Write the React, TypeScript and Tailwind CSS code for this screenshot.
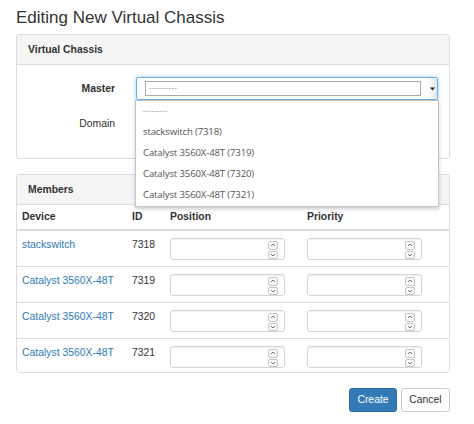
import React from "react";

const rows = [
  { name: "stackswitch", id: "7318" },
  { name: "Catalyst 3560X-48T", id: "7319" },
  { name: "Catalyst 3560X-48T", id: "7320" },
  { name: "Catalyst 3560X-48T", id: "7321" },
];

const rowH = ["h-[35px]", "h-[36px]", "h-[36px]", "h-[34px]"];

function Spinner() {
  return (
    <div className="absolute right-[6px] top-[2px] flex flex-col gap-[1px]">
      {[0, 1].map((i) => (
        <div
          key={i}
          className="w-[10px] h-[8.5px] border border-[#c8c8c8] rounded-[2px] bg-[#f8f8f8] flex items-center justify-center"
        >
          <svg width="6" height="4" viewBox="0 0 6 4">
            <path
              d={i === 0 ? "M1 3 L3 1 L5 3" : "M1 1 L3 3 L5 1"}
              fill="none"
              stroke="#666"
              strokeWidth="0.9"
            />
          </svg>
        </div>
      ))}
    </div>
  );
}

function NumInput() {
  return (
    <div className="relative w-[115px] h-[22px] border border-[#d4d4d4] rounded-[3px] bg-white shadow-[inset_0_1px_1px_rgba(0,0,0,0.06)]">
      <Spinner />
    </div>
  );
}

export default function App() {
  return (
    <div
      className="w-[474px] h-[424px] bg-white text-[#333] pl-[16px] pr-[24px] pt-[8px]"
      style={{ fontFamily: "'Liberation Sans', Arial, sans-serif" }}
    >
      <h1 className="text-[17px] leading-[20px] font-normal mb-[6px]">Editing New Virtual Chassis</h1>

      {/* Panel 1 */}
      <div className="border border-[#ddd] rounded-[3px]">
        <div className="h-[30px] bg-[#f5f5f5] border-b border-[#ddd] flex items-center pl-[11px] text-[10.4px] font-bold rounded-t-[3px]">
          Virtual Chassis
        </div>
        <div className="pt-[12px] pb-[23px] flex flex-col gap-[12px] relative">
          <div className="flex items-center h-[23px]">
            <div className="w-[98px] text-right text-[10.4px] font-bold">Master</div>
            <div className="ml-[21px] w-[302px] h-[23px] border border-[#66afe9] rounded-[2px] shadow-[0_0_4px_rgba(102,175,233,0.6)] flex items-center relative bg-white">
              <div className="ml-[8px] w-[276px] h-[15px] border border-[#a9a9a9] flex items-center pl-[3px]">
                <span className="text-[7px] text-[#777] tracking-[0.5px]">----------</span>
              </div>
              <div className="absolute right-0 top-0 bottom-0 w-[9px] bg-gradient-to-r from-[#fff] to-[#e5e5e5] flex items-center justify-center">
                <svg width="5" height="4" viewBox="0 0 5 4">
                  <path d="M0 0.5 L5 0.5 L2.5 3.5 Z" fill="#222" />
                </svg>
              </div>
            </div>
          </div>
          <div className="flex items-center h-[23px]">
            <div className="w-[98px] text-right text-[10.4px]">Domain</div>
            <div className="ml-[21px] w-[302px] h-[23px] border border-[#ccc] rounded-[3px] bg-white"></div>
          </div>

          {/* Dropdown list */}
          <div
            className="absolute left-[118px] top-[35px] w-[304px] bg-white border border-[#c4c4c4] shadow-[0_2px_4px_rgba(0,0,0,0.2)] text-[9.6px] tracking-[-0.15px] text-[#555] z-10"
            style={{ fontFamily: "'Open Sans', 'Noto Sans', sans-serif" }}
          >
            <div className="h-[21px] flex items-center pl-[7px]">
              <span className="text-[7px] tracking-[0.5px] text-[#777]">---------</span>
            </div>
            <div className="h-[21px] flex items-center pl-[7px]">stackswitch (7318)</div>
            <div className="h-[21px] flex items-center pl-[7px]">Catalyst 3560X-48T (7319)</div>
            <div className="h-[21px] flex items-center pl-[7px]">Catalyst 3560X-48T (7320)</div>
            <div className="h-[21px] flex items-center pl-[7px]">Catalyst 3560X-48T (7321)</div>
          </div>
        </div>
      </div>

      {/* Panel 2 */}
      <div className="mt-[15px] border border-[#ddd] rounded-[3px] text-[10.4px]">
        <div className="h-[30px] bg-[#f5f5f5] border-b border-[#ddd] flex items-center pl-[11px] font-bold rounded-t-[3px]">
          Members
        </div>
        <div className="grid grid-cols-[110px_38px_137px_1fr] h-[26px] border-b-2 border-[#ddd] font-bold items-center">
          <div className="pl-[5px]">Device</div>
          <div className="pl-[5px]">ID</div>
          <div className="pl-[5px]">Position</div>
          <div className="pl-[5px]">Priority</div>
        </div>
        {rows.map((r, i) => (
          <div
            key={i}
            className={`grid grid-cols-[110px_38px_137px_1fr] ${rowH[i]} ${i > 0 ? "border-t border-[#ddd]" : ""}`}
          >
            <div className="pl-[5px] pt-[6px] text-[#337ab7] leading-[15px]">{r.name}</div>
            <div className="pl-[5px] pt-[6px] leading-[15px]">{r.id}</div>
            <div className="pl-[5px] pt-[7px]">
              <NumInput />
            </div>
            <div className="pl-[5px] pt-[7px]">
              <NumInput />
            </div>
          </div>
        ))}
      </div>

      <div className="flex justify-end gap-[4px] mt-[15px] text-[10.4px]">
        <button className="w-[48px] h-[24px] bg-[#337ab7] border border-[#2e6da4] text-white rounded-[3px]">
          Create
        </button>
        <button className="w-[49px] h-[24px] bg-white border border-[#ccc] text-[#333] rounded-[3px]">
          Cancel
        </button>
      </div>
    </div>
  );
}
